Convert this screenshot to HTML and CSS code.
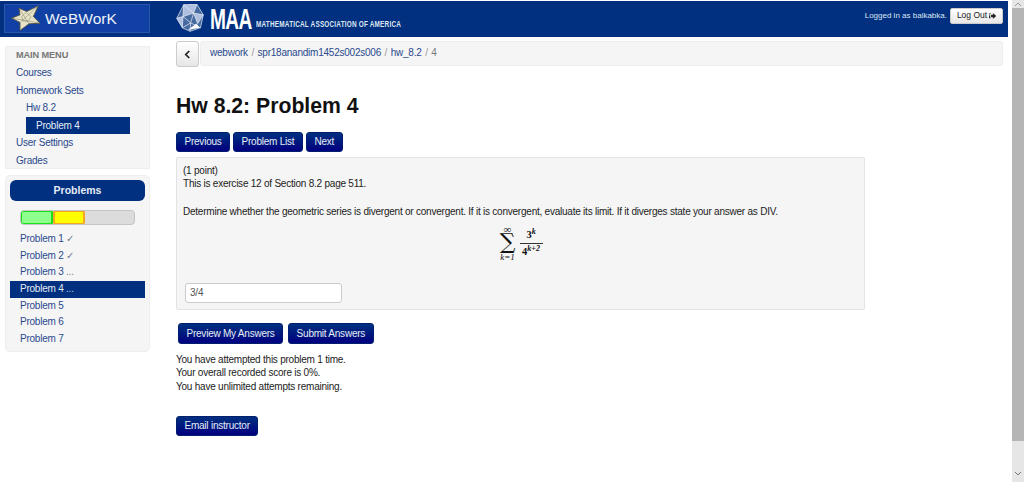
FILE: index.html
```html
<!DOCTYPE html>
<html lang="en">
<head>
<meta charset="utf-8">
<title>Hw 8.2: Problem 4</title>
<link rel="stylesheet" href="styles.css">
</head>
<body>
<div class="page">
  <div class="content">
    <header class="topbar">
      <a class="brand">
        <svg class="star" viewBox="18 16 90 80" width="30" height="27">
          <path d="M100 18 L85 50 L105 70 L72 72 L45 92 L45 68 L20 55 L45 45 L42 25 L65 35 Z" fill="#e6e3c8" stroke="#4f4f3a" stroke-width="2.500" stroke-linejoin="round"/>
          <path d="M42 25 L72 72 M100 18 L45 68 M20 55 L105 70 M50 50 L64 38 L78 50 L70 64 L54 64 Z" fill="none" stroke="#86856a" stroke-width="1.500"/>
        </svg>
        <span>WeBWorK</span>
      </a>
      <div class="maa">
        <svg class="ico" viewBox="10 4 80 80" width="28" height="28">
          <path d="M32 6 L70 5 L88 35 L80 72 L50 82 L28 72 L12 45 Z" fill="#46699f"/>
          <path d="M32 6 L70 5 L60 30 L30 40 Z M12 45 L30 40 L28 72 Z M60 30 L88 35 L72 60 Z" fill="#aebfe0"/>
          <path d="M44 78 L78 72 L68 60 Z" fill="#fff"/>
          <path d="M32 6 L70 5 L88 35 L80 72 L50 82 L28 72 L12 45 Z M32 6 L30 40 L12 45 M32 6 L60 30 L70 5 M30 40 L60 30 L88 35 M30 40 L28 72 L52 58 L30 40 M60 30 L52 58 L80 72 M60 30 L72 60 L88 35 M52 58 L50 82" fill="none" stroke="#e8eef8" stroke-width="2"/>
        </svg>
        <span class="maa-big">MAA</span>
        <span class="maa-small">MATHEMATICAL ASSOCIATION OF AMERICA</span>
      </div>
      <div class="user">
        <span>Logged in as balkabka.</span>
        <a class="logout">Log Out <svg viewBox="0 0 10 8" width="7" height="6"><path d="M0 1 H2 V0 M0 1 V7 H2 M3 2.5 H6 V0.5 L10 4 L6 7.5 V5.500 H3 Z" fill="#222" stroke="#222" stroke-width=".6"/></svg></a>
      </div>
    </header>

    <div class="layout">
      <aside class="sidebar">
        <nav class="menu">
          <div class="menu-head">MAIN MENU</div>
          <a class="menu-item">Courses</a>
          <a class="menu-item">Homework Sets</a>
          <a class="menu-item sub">Hw 8.2</a>
          <a class="menu-item sub2 current">Problem 4</a>
          <a class="menu-item">User Settings</a>
          <a class="menu-item">Grades</a>
        </nav>
        <section class="problems">
          <h2 class="problems-head">Problems</h2>
          <div class="progress">
            <span class="seg seg-green"></span>
            <span class="seg seg-yellow"></span>
          </div>
          <ul class="plist">
            <li>Problem 1 <i>✓</i></li>
            <li>Problem 2 <i>✓</i></li>
            <li>Problem 3 <i>...</i></li>
            <li class="active">Problem 4 <i>...</i></li>
            <li>Problem 5</li>
            <li>Problem 6</li>
            <li>Problem 7</li>
          </ul>
        </section>
      </aside>

      <main class="main">
        <div class="crumbrow">
          <a class="back"><svg viewBox="0 0 8 10" width="7" height="9"><path d="M6 1 L2 5 L6 9" fill="none" stroke="#222" stroke-width="2"/></svg></a>
          <div class="crumbs"><a>webwork</a> <s>/</s> <a>spr18anandim1452s002s006</a> <s>/</s> <a>hw_8.2</a> <s>/</s> <em>4</em></div>
        </div>
        <h1 class="title">Hw 8.2: Problem 4</h1>
        <div class="btnrow">
          <a class="btn">Previous</a>
          <a class="btn">Problem List</a>
          <a class="btn">Next</a>
        </div>
        <section class="problem">
          <p>(1 point)<br>This is exercise 12 of Section 8.2 page 511.</p>
          <p class="q">Determine whether the geometric series is divergent or convergent. If it is convergent, evaluate its limit. If it diverges state your answer as DIV.</p>
          <div class="math">
            <div class="sum"><small>∞</small><b>∑</b><small class="lower">k=1</small></div>
            <div class="frac"><div class="num">3<sup>k</sup></div><div class="den">4<sup>k+2</sup></div></div>
          </div>
          <input class="answer" type="text" value="3/4">
        </section>
        <div class="btnrow submit">
          <a class="btn tall">Preview My Answers</a>
          <a class="btn tall">Submit Answers</a>
        </div>
        <p class="status">You have attempted this problem 1 time.<br>Your overall recorded score is 0%.<br>You have unlimited attempts remaining.</p>
        <a class="btn email">Email instructor</a>
      </main>
    </div>
  </div>
  <div class="scrollbar">
    <div class="arrow"><svg viewBox="0 0 8 5" width="8" height="5"><path d="M1 4 L4 1 L7 4" fill="none" stroke="#999" stroke-width="1"/></svg></div>
    <div class="thumb"></div>
    <div class="arrow"><svg viewBox="0 0 8 5" width="8" height="5"><path d="M1 1 L4 4 L7 1" fill="none" stroke="#777" stroke-width="1"/></svg></div>
  </div>
</div>
</body>
</html>
```
FILE: styles.css
```css
* { box-sizing: border-box; }
html, body { margin: 0; height: 482px; overflow: hidden; background: #fff; }
body { font: 10px/13.3px "Liberation Sans", Arial, sans-serif; letter-spacing: -.23px; color: #222; }
a { color: inherit; text-decoration: none; }

.page { display: flex; height: 482px; }
.content { flex: 1; min-width: 0; }

.topbar {
  display: flex; align-items: center;
  height: 36px; margin: 1px 4px 0 0; padding-left: 4px;
  background: #00307f; color: #fff;
}
.brand {
  display: flex; align-items: center; gap: 4px;
  width: 146px; height: 29px; padding-left: 6px; margin-top: -1px;
  background: #1040a4; border: 1px solid #2a55a8;
  font-size: 15.5px; letter-spacing: 0; color: #eef2fa;
}
.maa { display: flex; align-items: center; margin-left: 26px; letter-spacing: 0; }
.ico { margin-top: -2px; }
.maa-big {
  display: inline-block; width: 40px; margin-left: 6px;
  font: bold 29px/30px "Liberation Sans", sans-serif; letter-spacing: -1px; color: #fff;
  transform: scaleX(.66); transform-origin: left center;
}
.maa-small {
  display: inline-block; width: 145px; margin: 9px 0 0 6px; white-space: nowrap;
  font: bold 8.6px/10px "Liberation Sans", sans-serif; letter-spacing: .28px; color: #dfe6f3;
  transform: scaleX(.743); transform-origin: left center;
}
.user { display: flex; align-items: center; gap: 3px; margin-left: auto; padding-right: 5px; font-size: 8px; letter-spacing: 0; margin-top: -6px; color: #dfe6f3; }
.logout {
  display: flex; align-items: center; gap: 2px; justify-content: center;
  width: 53px; height: 16px; background: linear-gradient(#fff, #e8e8e8);
  border: 1px solid #ccc; border-radius: 2px; color: #222; font-size: 8.500px;
}

.layout { display: flex; }
.sidebar { width: 145px; margin: 9px 0 0 5px; flex: none; }
.menu { height: 123px; padding: 1px 0 0; background: #f5f5f5; border: 1px solid #eee; }
.menu-head { padding-left: 10px; height: 14px; line-height: 14px; font-weight: bold; color: #777; font-size: 9.2px; letter-spacing: -.1px; }
.menu-item { display: block; height: 17.5px; line-height: 17.5px; padding-left: 10px; color: #2a4a8e; }
.menu-item.sub { margin-left: 10px; }
.menu-item.sub2 { margin: 0 19px 0 20px; padding-left: 10px; }
.current { background: #00307f; color: #e6ecf6; }
.menu-head + .menu-item { margin-top: 2px; }

.problems {
  height: 177px; margin-top: 6px; padding: 4px 4px 0;
  background: #f5f5f5; border: 1px solid #eee; border-radius: 5px;
}
.problems-head {
  margin: 0; height: 21px; border-radius: 6px; background: #00307f; letter-spacing: 0;
  color: #e6ecf6; font: bold 10.500px/20px "Liberation Sans", sans-serif; text-align: center;
}
.progress {
  display: flex; height: 15px; margin: 9px 10px 0;
  background: #dcdcdc; border: 1px solid #c4c4c4; border-radius: 4px; overflow: hidden;
}
.seg { width: 33px; margin: -1px 0; border-radius: 3px; }
.seg-green { background: #8cff8c; border: 2px solid #1de01d; margin-left: -1px; }
.seg-yellow { width: 32px; background: #ff0; border: 2px solid #f5a623; }
.plist { list-style: none; margin: 6px 0 0; padding: 0; }
.plist li { height: 16.650px; line-height: 16.650px; padding-left: 10px; color: #2a4a8e; }
.plist i { font-style: normal; color: #6f7a92; }
.plist .active { background: #00307f; color: #e6ecf6; }
.plist .active i { color: #b8c4dc; }

.main { flex: 1; margin-left: 26px; padding-right: 9px; min-width: 0; }
.crumbrow { display: flex; gap: 1px; margin-top: 4px; }
.back {
  display: flex; align-items: center; justify-content: center;
  width: 23px; height: 26px; background: linear-gradient(#fff, #e6e6e6);
  border: 1px solid #ccc; border-radius: 3px;
}
.crumbs {
  flex: 1; height: 25px; line-height: 22px; padding-left: 9px;
  background: #f5f5f5; border: 1px solid #eee; border-radius: 3px; color: #999;
}
.crumbs a { color: #2a4a8e; }
.crumbs s { text-decoration: none; margin: 0 1px; }
.crumbs em { font-style: normal; color: #777; }
.title { margin: 26px 0 0; font: bold 21.2px/25px "Liberation Sans", sans-serif; letter-spacing: 0; color: #111; }
.btnrow { display: flex; gap: 3px; margin-top: 14px; }
.btn {
  display: inline-block; height: 20px; line-height: 18px; padding: 0 7.5px;
  background: linear-gradient(#00307f, #00007f); color: #e6ecf6;
  border: 1px solid #00206f; border-radius: 3px;
}
.problem {
  width: 689px; height: 153px; margin-top: 5px; padding: 6px 6px;
  background: #f5f5f5; border: 1px solid #e3e3e3; border-radius: 2px;
}
.problem p { margin: 0; }
.problem .q { margin-top: 14px; }
.math {
  display: flex; align-items: center; justify-content: center; gap: 3px;
  height: 38px; margin-top: 6px; letter-spacing: 0;
  font-family: "Liberation Serif", serif; color: #111;
}
.sum { display: flex; flex-direction: column; align-items: center; width: 18px; }
.sum small { font-size: 11px; line-height: 8px; }
.sum .lower { font-size: 9px; font-style: italic; margin-top: 1px; }
.sum b { font: 22px/20px "DejaVu Serif", serif; margin-top: -1px; }
.frac { text-align: center; font-weight: bold; font-size: 10.5px; line-height: 13px; min-width: 23px; }
.num { padding-bottom: 2px; border-bottom: 1px solid #333; }
.den { padding-top: 1px; }
.frac sup { font-size: 8px; line-height: 0; font-style: italic; }
.answer {
  display: block; width: 157px; height: 20px; margin: 21px 0 0 2px; padding: 0 4px;
  background: #fff; border: 1px solid #ccc; border-radius: 3px;
  font: 10px "Liberation Sans", sans-serif; letter-spacing: -.23px; color: #555;
}
.submit { margin: 13px 0 0 2px; gap: 5px; }
.tall { height: 21px; line-height: 19px; }
.status { margin: 9px 0 0; }
.email { margin-top: 23px; }

.scrollbar { display: flex; flex-direction: column; width: 12px; background: #e6e6e6; flex: none; }
.arrow { display: flex; align-items: center; justify-content: center; height: 8px; flex: none; }
.thumb { height: 433px; background: #b5b5b5; }
.thumb + .arrow { margin-top: auto; height: 25px; padding-top: 8px; }
```
